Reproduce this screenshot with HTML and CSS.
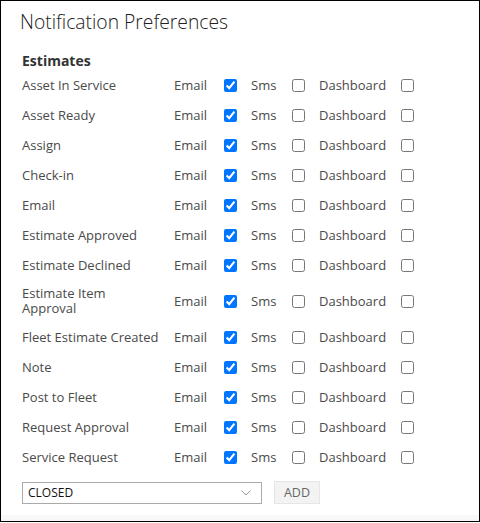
FILE: index.html
```html
<!DOCTYPE html>
<html>
<head>
<meta charset="utf-8">
<link rel="stylesheet" href="styles.css">
</head>
<body>
<div class="panel">
  <div class="content">
    <h1 class="title">Notification Preferences</h1>
    <h2 class="section">Estimates</h2>
    <div class="grid">
      <div class="name">Asset In Service</div><div class="lbl">Email</div><input type="checkbox" checked><div class="lbl">Sms</div><input type="checkbox"><div class="lbl">Dashboard</div><input type="checkbox">
      <div class="name">Asset Ready</div><div class="lbl">Email</div><input type="checkbox" checked><div class="lbl">Sms</div><input type="checkbox"><div class="lbl">Dashboard</div><input type="checkbox">
      <div class="name">Assign</div><div class="lbl">Email</div><input type="checkbox" checked><div class="lbl">Sms</div><input type="checkbox"><div class="lbl">Dashboard</div><input type="checkbox">
      <div class="name">Check-in</div><div class="lbl">Email</div><input type="checkbox" checked><div class="lbl">Sms</div><input type="checkbox"><div class="lbl">Dashboard</div><input type="checkbox">
      <div class="name">Email</div><div class="lbl">Email</div><input type="checkbox" checked><div class="lbl">Sms</div><input type="checkbox"><div class="lbl">Dashboard</div><input type="checkbox">
      <div class="name">Estimate Approved</div><div class="lbl">Email</div><input type="checkbox" checked><div class="lbl">Sms</div><input type="checkbox"><div class="lbl">Dashboard</div><input type="checkbox">
      <div class="name">Estimate Declined</div><div class="lbl">Email</div><input type="checkbox" checked><div class="lbl">Sms</div><input type="checkbox"><div class="lbl">Dashboard</div><input type="checkbox">
      <div class="name">Estimate Item Approval</div><div class="lbl">Email</div><input type="checkbox" checked><div class="lbl">Sms</div><input type="checkbox"><div class="lbl">Dashboard</div><input type="checkbox">
      <div class="name">Fleet Estimate Created</div><div class="lbl">Email</div><input type="checkbox" checked><div class="lbl">Sms</div><input type="checkbox"><div class="lbl">Dashboard</div><input type="checkbox">
      <div class="name">Note</div><div class="lbl">Email</div><input type="checkbox" checked><div class="lbl">Sms</div><input type="checkbox"><div class="lbl">Dashboard</div><input type="checkbox">
      <div class="name">Post to Fleet</div><div class="lbl">Email</div><input type="checkbox" checked><div class="lbl">Sms</div><input type="checkbox"><div class="lbl">Dashboard</div><input type="checkbox">
      <div class="name">Request Approval</div><div class="lbl">Email</div><input type="checkbox" checked><div class="lbl">Sms</div><input type="checkbox"><div class="lbl">Dashboard</div><input type="checkbox">
      <div class="name">Service Request</div><div class="lbl">Email</div><input type="checkbox" checked><div class="lbl">Sms</div><input type="checkbox"><div class="lbl">Dashboard</div><input type="checkbox">
    </div>
    <div class="add-row">
      <div class="select">
        <span>CLOSED</span>
        <svg class="chev" width="10" height="6" viewBox="0 0 10 6"><path d="M0.5 0.5 L5 5 L9.5 0.5" fill="none" stroke="#999" stroke-width="1"/></svg>
      </div>
      <button class="add">ADD</button>
    </div>
  </div>
  <div class="foot"></div>
</div>
</body>
</html>
```

FILE: styles.css
```css
* { box-sizing: border-box; }
html, body { margin: 0; padding: 0; background: #fff; }
body { font-family: "Open Sans", "Liberation Sans", sans-serif; color: #4a4a4a; }
.panel {
  width: 480px;
  height: 522px;
  border: 1px solid #000;
  display: flex;
  flex-direction: column;
}
.content { flex: 1; padding: 0 0 0 21px; }
.title {
  margin: 0;
  padding: 9px 0 0 0;
  margin-left: -2px;
  font-size: 19.3px;
  font-weight: 300;
  color: #222;
  line-height: 24px;
}
.section {
  margin: 18px 0 0 0;
  font-size: 14px;
  font-weight: 700;
  color: #333;
  line-height: 18px;
}
.grid {
  display: grid;
  grid-template-columns: 152px 50px 27px 41px 27px 82px 20px;
  align-items: center;
  margin-top: 0;
}
.grid > * { padding: 6px 0; }
.name { font-size: 13px; line-height: 15px; padding-right: 13px; }
.lbl { font-size: 13px; line-height: 18px; }
.grid input {
  margin: 0;
  width: 13px;
  height: 13px;
  padding: 0;
}
.add-row {
  display: flex;
  align-items: center;
  gap: 12px;
  margin-top: 9px;
}
.select {
  width: 240px;
  height: 22px;
  border: 1px solid #aaa;
  display: flex;
  align-items: center;
  justify-content: space-between;
  padding: 0 10px 0 5px;
  font-size: 12px;
  color: #111;
}
.add {
  height: 23px;
  width: 46px;
  background: #f3f3f3;
  border: 1px solid #e6e6e6;
  color: #666;
  font-family: "Open Sans", "Liberation Sans", sans-serif;
  font-size: 12.5px;
  padding: 0;
}
.foot { height: 6px; background: #f8f8f8; }
```
